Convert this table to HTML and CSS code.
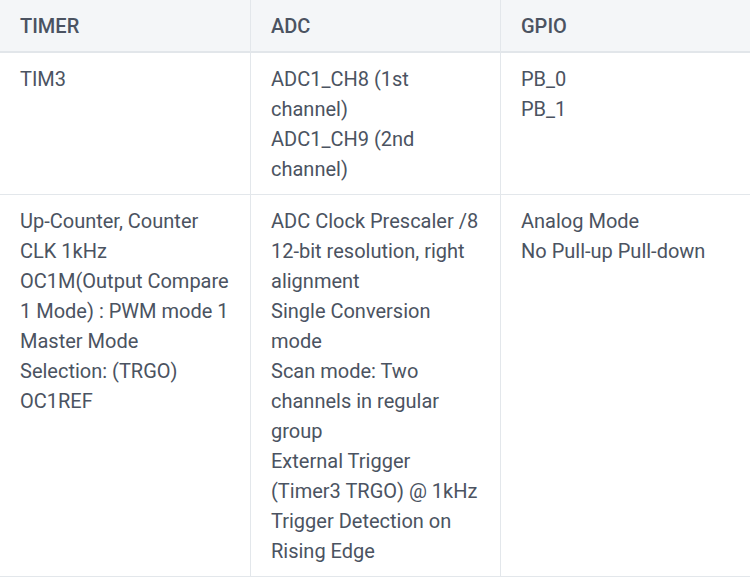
FILE: index.html
```html
<!DOCTYPE html>
<html>
<head>
<meta charset="utf-8">
<link rel="stylesheet" href="styles.css">
</head>
<body>
<table class="spec">
  <thead>
    <tr>
      <th>TIMER</th>
      <th>ADC</th>
      <th>GPIO</th>
    </tr>
  </thead>
  <tbody>
    <tr>
      <td>TIM3</td>
      <td>ADC1_CH8 (1st channel)<br>ADC1_CH9 (2nd channel)</td>
      <td>PB_0<br>PB_1</td>
    </tr>
    <tr>
      <td>Up-Counter, Counter CLK 1kHz<br>OC1M(Output Compare 1 Mode) : PWM mode 1<br>Master Mode Selection: (TRGO) OC1REF</td>
      <td>ADC Clock Prescaler /8<br>12-bit resolution, right alignment<br>Single Conversion mode<br>Scan mode: Two channels in regular group<br>External Trigger (Timer3 TRGO) @ 1kHz<br>Trigger Detection on Rising Edge</td>
      <td>Analog Mode<br>No Pull-up Pull-down</td>
    </tr>
  </tbody>
</table>
</body>
</html>
```
FILE: styles.css
```css
html, body {
  margin: 0;
  padding: 0;
  background: #ffffff;
}

.spec {
  width: 750px;
  border-collapse: separate;
  border-spacing: 0;
  table-layout: fixed;
  font-family: Roboto, "Liberation Sans", sans-serif;
  font-size: 20px;
  line-height: 30px;
  color: #4b5361;
}

.spec th,
.spec td {
  width: 250px;
  text-align: left;
  vertical-align: top;
  box-sizing: border-box;
}

.spec th {
  background: #f4f6f8;
  font-weight: 500;
  color: #4b5361;
  padding: 11px 20px 10px;
  border-bottom: 2px solid #e2e6ea;
}

.spec td {
  padding: 11px 20px 10px;
  border-bottom: 1px solid #e3e7eb;
  font-weight: 400;
}

.spec th + th,
.spec td + td {
  border-left: 1px solid #e3e7eb;
}
```
